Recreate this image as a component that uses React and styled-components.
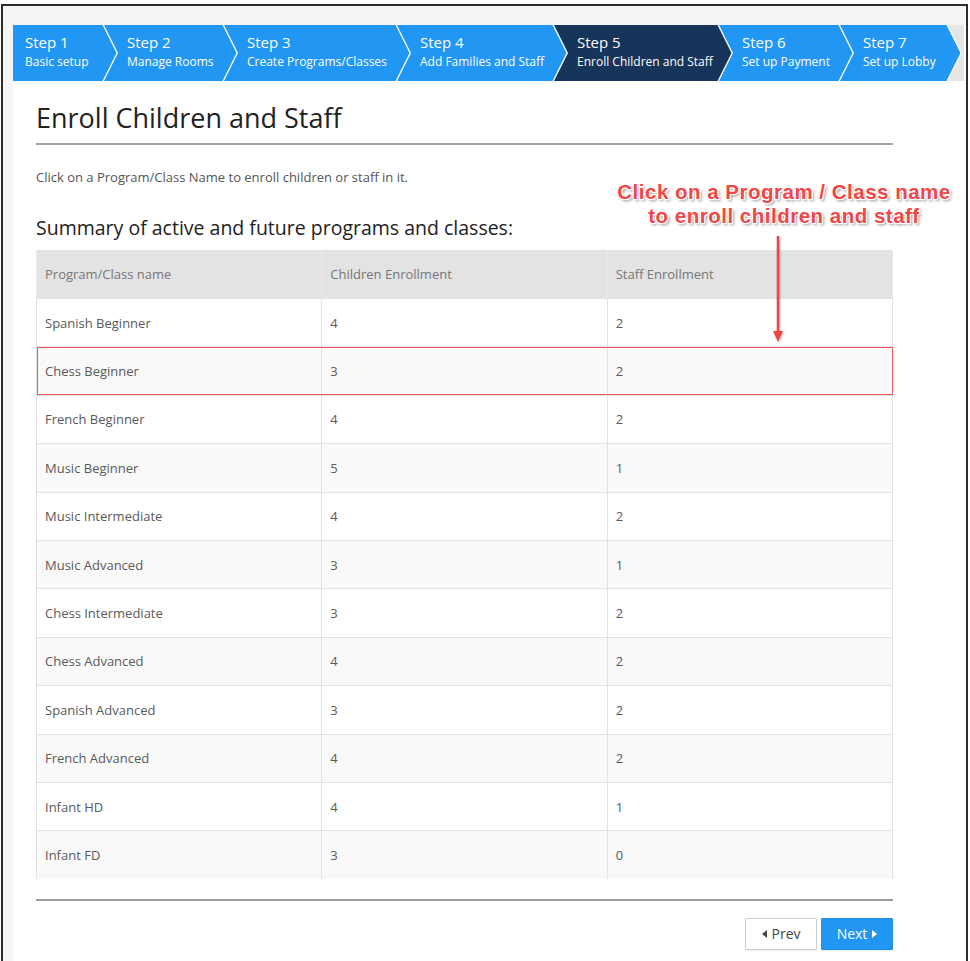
import React from "react";
import styled, { createGlobalStyle } from "styled-components";

const GlobalStyle = createGlobalStyle`
  body {
    margin: 0;
    background: #fff;
    font-family: "Open Sans", "Noto Sans", sans-serif;
  }
`;

const steps = [
  { title: "Step 1", label: "Basic setup", width: 103.5 },
  { title: "Step 2", label: "Manage Rooms", width: 132.5 },
  { title: "Step 3", label: "Create Programs/Classes", width: 185.5 },
  { title: "Step 4", label: "Add Families and Staff", width: 169.5 },
  { title: "Step 5", label: "Enroll Children and Staff", width: 177.5, active: true },
  { title: "Step 6", label: "Set up Payment", width: 133.5 },
  { title: "Step 7", label: "Set up Lobby", width: 120.5 }
];

const programs = [
  ["Spanish Beginner", 4, 2],
  ["Chess Beginner", 3, 2],
  ["French Beginner", 4, 2],
  ["Music Beginner", 5, 1],
  ["Music Intermediate", 4, 2],
  ["Music Advanced", 3, 1],
  ["Chess Intermediate", 3, 2],
  ["Chess Advanced", 4, 2],
  ["Spanish Advanced", 3, 2],
  ["French Advanced", 4, 2],
  ["Infant HD", 4, 1],
  ["Infant FD", 3, 0]
];

const Caret = ({ dir }) => (
  <svg width="5" height="8" viewBox="0 0 5 8">
    {dir === "left" ? (
      <path d="M5 0 L0 4 L5 8 Z" fill="currentColor" />
    ) : (
      <path d="M0 0 L5 4 L0 8 Z" fill="currentColor" />
    )}
  </svg>
);

export default function App() {
  return (
    <>
      <GlobalStyle />
      <Frame>
        <Panel>
          <StepBar>
            {steps.map((s, i) => (
              <Step key={s.title} $width={s.width} $first={i === 0} $active={s.active}>
                <StepTitle>{s.title}</StepTitle>
                <StepLabel>{s.label}</StepLabel>
              </Step>
            ))}
            <StepFiller />
          </StepBar>

          <Content>
            <PageTitle>Enroll Children and Staff</PageTitle>
            <Intro>Click on a Program/Class Name to enroll children or staff in it.</Intro>
            <SubTitle>Summary of active and future programs and classes:</SubTitle>

            <Table>
              <thead>
                <tr>
                  <Th>Program/Class name</Th>
                  <Th>Children Enrollment</Th>
                  <Th>Staff Enrollment</Th>
                </tr>
              </thead>
              <tbody>
                {programs.map(([name, kids, staff], i) => (
                  <Row key={name} $striped={i % 2 === 1} $marked={i === 1}>
                    <Td>{name}</Td>
                    <Td>{kids}</Td>
                    <Td>{staff}</Td>
                  </Row>
                ))}
              </tbody>
            </Table>

            <Footer>
              <NavButton>
                <Caret dir="left" /> Prev
              </NavButton>
              <NavButton $primary>
                Next <Caret dir="right" />
              </NavButton>
            </Footer>
          </Content>

          <Callout>
            Click on a Program / Class name
            <br />
            to enroll children and staff
          </Callout>
          <CalloutArrow width="16" height="108" viewBox="0 0 16 108">
            <line x1="8" y1="0" x2="8" y2="96" stroke="#f04545" strokeWidth="2.5" />
            <path d="M3 95 L13 95 L8 106 Z" fill="#f04545" />
          </CalloutArrow>
        </Panel>
      </Frame>
    </>
  );
}

const Frame = styled.div`
  box-sizing: border-box;
  width: 967px;
  min-height: 957px;
  margin: 4px 0 0 1px;
  border: 2px solid #2d2d2d;
  border-bottom: none;
  background: #f5f5f5;
  padding: 19px 0 0 10px;
`;

const Panel = styled.div`
  position: relative;
  background: #fff;
  min-height: 936px;
`;

const StepBar = styled.div`
  display: flex;
  height: 56px;
  margin-right: 2px;
  background: #fff;
`;

const Step = styled.div`
  box-sizing: border-box;
  flex: 0 0 ${(p) => p.$width}px;
  margin-left: ${(p) => (p.$first ? 0 : -12.5)}px;
  padding: 8px 0 0 ${(p) => (p.$first ? 12 : 23)}px;
  background: ${(p) => (p.$active ? "#17345b" : "#2196f3")};
  color: #fff;
  white-space: nowrap;
  clip-path: ${(p) =>
    p.$first
      ? "polygon(0 0, calc(100% - 14px) 0, 100% 50%, calc(100% - 14px) 100%, 0 100%)"
      : "polygon(0 0, calc(100% - 14px) 0, 100% 50%, calc(100% - 14px) 100%, 0 100%, 14px 50%)"};
`;

const StepFiller = styled.div`
  flex: 1;
  margin-left: -12.5px;
  background: #e6e6e6;
  clip-path: polygon(0 0, 100% 0, 100% 100%, 0 100%, 14px 50%);
`;

const StepTitle = styled.div`
  font-size: 15px;
  line-height: 18px;
`;

const StepLabel = styled.div`
  margin-top: 3px;
  font-size: 12px;
  line-height: 16px;
`;

const Content = styled.div`
  width: 857px;
  margin-left: 23px;
`;

const PageTitle = styled.h1`
  margin: 21px 0 0;
  padding-bottom: 9px;
  border-bottom: 2px solid #a4a4a4;
  font-size: 27px;
  line-height: 32px;
  font-weight: 400;
  color: #222;
`;

const Intro = styled.p`
  margin: 23px 0 0;
  font-size: 13px;
  line-height: 18px;
  color: #555;
`;

const SubTitle = styled.h2`
  margin: 29px 0 0;
  font-size: 19.5px;
  line-height: 26px;
  font-weight: 400;
  color: #222;
`;

const Table = styled.table`
  width: 100%;
  margin-top: 9px;
  border-collapse: collapse;
  table-layout: fixed;
  font-size: 13px;
`;

const Th = styled.th`
  height: 48px;
  padding: 0 8px;
  background: #e3e3e3;
  border-left: 1px solid #eaeaea;
  color: #777;
  font-weight: 400;
  text-align: left;
`;

const Row = styled.tr`
  background: ${(p) => (p.$striped ? "#f9f9f9" : "#fff")};
  outline: ${(p) => (p.$marked ? "1px solid #f05a5a" : "none")};
  outline-offset: -1px;
`;

const Td = styled.td`
  height: 47.4px;
  padding: 0 8px;
  border-top: 1px solid #e2e2e2;
  border-left: 1px solid #e2e2e2;
  border-right: 1px solid #e2e2e2;
  color: #5a5a5a;
`;

const Footer = styled.div`
  display: flex;
  justify-content: flex-end;
  gap: 4px;
  margin-top: 20px;
  padding-top: 17px;
  border-top: 2px solid #9c9c9c;
`;

const NavButton = styled.button`
  display: flex;
  align-items: center;
  justify-content: center;
  gap: 5px;
  box-sizing: border-box;
  width: 72px;
  height: 32px;
  padding: 0;
  border: 1px solid ${(p) => (p.$primary ? "#1e8ee6" : "#cfcfcf")};
  border-radius: 1px;
  background: ${(p) => (p.$primary ? "#2196f3" : "#fff")};
  color: ${(p) => (p.$primary ? "#fff" : "#444")};
  font-family: "Open Sans", sans-serif;
  font-size: 14px;
  box-shadow: 0 1px 1px rgba(0, 0, 0, 0.08);
`;

const Callout = styled.div`
  position: absolute;
  left: 581px;
  top: 155px;
  width: 380px;
  text-align: center;
  font-family: "Liberation Sans", Arial, sans-serif;
  font-weight: 700;
  font-size: 20.5px;
  letter-spacing: 0.5px;
  line-height: 24px;
  color: #f04848;
  text-shadow: 1px 0 0 #fff, -1px 0 0 #fff, 0 1px 0 #fff, 0 -1px 0 #fff,
    1px 1px 0 #fff, -1px -1px 0 #fff, 1px -1px 0 #fff, -1px 1px 0 #fff,
    2px 2px 3px rgba(0, 0, 0, 0.45);
`;

const CalloutArrow = styled.svg`
  position: absolute;
  left: 757px;
  top: 211px;
  filter: drop-shadow(1px 1px 1px rgba(0, 0, 0, 0.25));
`;
